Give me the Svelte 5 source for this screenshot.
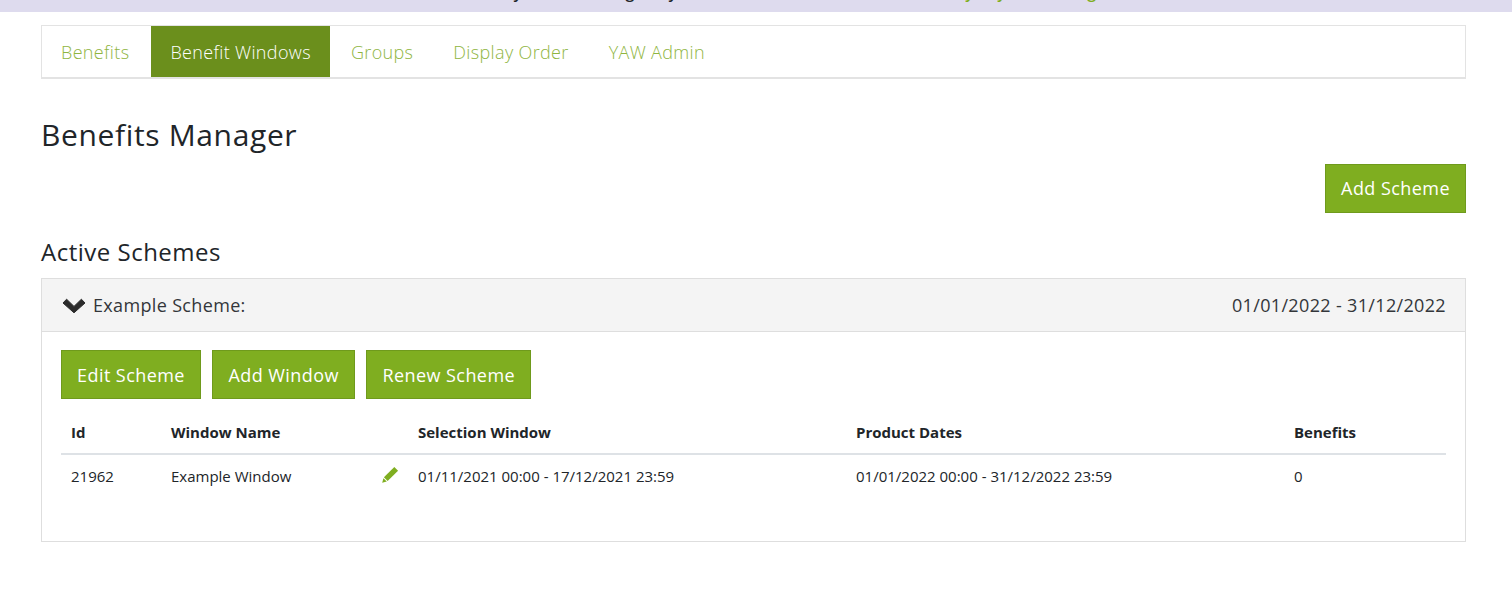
<script lang="ts">
	const tabs = ['Benefits', 'Benefit Windows', 'Groups', 'Display Order', 'YAW Admin'];
	const active = 'Benefit Windows';
	const actions = ['Edit Scheme', 'Add Window', 'Renew Scheme'];
</script>

<div class="banner">
	<p>Admin area: your windows go to your scheme and the head office too <span>by any of the wing</span></p>
</div>

<div class="page">
	<nav class="tabs">
		{#each tabs as tab}
			<a href="#top" class:active={tab === active}>{tab}</a>
		{/each}
	</nav>

	<h1>Benefits Manager</h1>
	<div class="toolbar">
		<button>Add Scheme</button>
	</div>

	<h2>Active Schemes</h2>
	<section class="panel">
		<header>
			<div class="title">
				<svg viewBox="0 0 24 16" width="24" height="16" aria-hidden="true">
					<path d="M1 6 4.6 2.2 12 9.4 19.4 2.2 23 6 12 15.8Z" fill="#2b2b2b" stroke="#2b2b2b" stroke-linejoin="round" />
				</svg>
				<span>Example Scheme:</span>
			</div>
			<span class="dates">01/01/2022 - 31/12/2022</span>
		</header>
		<div class="body">
			<div class="actions">
				{#each actions as action}
					<button>{action}</button>
				{/each}
			</div>
			<table>
				<thead>
					<tr>
						<th class="id">Id</th>
						<th class="name">Window Name</th>
						<th class="edit"></th>
						<th class="sel">Selection Window</th>
						<th class="prod">Product Dates</th>
						<th>Benefits</th>
					</tr>
				</thead>
				<tbody>
					<tr>
						<td>21962</td>
						<td>Example Window</td>
						<td class="edit">
							<svg viewBox="0 0 16 16" width="17" height="17" aria-hidden="true">
								<path d="M11.6.9 15.1 4.4 5.3 14.2 1.8 10.7Z" fill="#7fae20" />
								<path d="M1.3 11.5 4.5 14.7.2 15.8Z" fill="#7fae20" />
							</svg>
						</td>
						<td>01/11/2021 00:00 - 17/12/2021 23:59</td>
						<td>01/01/2022 00:00 - 31/12/2022 23:59</td>
						<td>0</td>
					</tr>
				</tbody>
			</table>
		</div>
	</section>
</div>

<style>
	:global(body) {
		margin: 0;
		background: #fff;
		font-family: "Open Sans", sans-serif;
		color: #212529;
	}
	.banner {
		height: 12px;
		background: #dedbee;
		overflow: hidden;
		display: flex;
		justify-content: center;
		align-items: flex-start;
	}
	.banner p {
		margin: -18px 0 0;
		font-size: 16px;
		line-height: 20px;
		font-weight: 600;
		white-space: nowrap;
		flex: none;
	}
	.banner span {
		color: #7fae20;
	}
	.page {
		padding: 13px 46px 0 41px;
	}
	.tabs {
		display: flex;
		height: 51px;
		border: 2px solid #e3e3e3;
		border-width: 1px 1px 2px;
	}
	.tabs a {
		padding: 0 20px;
		font-size: 18px;
		font-weight: 300;
		letter-spacing: 0.35px;
		line-height: 52px;
		color: #8fb53f;
		text-decoration: none;
	}
	.tabs a:first-child {
		padding-left: 19px;
	}
	.tabs a.active {
		background: #6b8f1c;
		color: #fff;
		padding: 0 19px;
		margin: 0 1px 0 2px;
	}
	h1 {
		margin: 35px 0 0;
		font-size: 30px;
		line-height: 41px;
		font-weight: 400;
		letter-spacing: 0.64px;
	}
	.toolbar {
		display: flex;
		justify-content: flex-end;
		margin-top: 9px;
	}
	button {
		height: 49px;
		padding: 0 15px 1px;
		border: 1px solid #6f9a1c;
		background: #7fae20;
		color: #fff;
		font-family: inherit;
		font-size: 18px;
		letter-spacing: 0.44px;
	}
	.actions button {
		padding-bottom: 0;
	}
	h2 {
		margin: 22px 0 0;
		font-size: 24px;
		line-height: 33px;
		font-weight: 400;
		letter-spacing: 0.5px;
	}
	.panel {
		margin-top: 10px;
		border: 1px solid #dedede;
		height: 264px;
		box-sizing: border-box;
	}
	.panel header {
		display: flex;
		justify-content: space-between;
		align-items: center;
		height: 52px;
		padding: 0 19px 0 20px;
		background: #f4f4f4;
		border-bottom: 1px solid #dedede;
		font-size: 18px;
		letter-spacing: 0.34px;
		color: #33363a;
	}
	.title {
		display: flex;
		align-items: center;
		gap: 7px;
	}
	.body {
		padding: 18px 19px 0;
	}
	.actions {
		display: flex;
		gap: 11.5px;
	}
	table {
		width: 100%;
		margin-top: 12px;
		border-collapse: collapse;
		table-layout: fixed;
		font-size: 15px;
	}
	th {
		text-align: left;
		font-weight: 700;
		height: 42px;
		padding: 0 10px;
		border-bottom: 2px solid #dee2e6;
	}
	td {
		padding: 11px 10px;
		line-height: 20px;
		vertical-align: top;
	}
	.id { width: 80px; }
	.name { width: 180px; }
	th.edit { width: 47px; padding: 0; }
	td.edit { padding: 11px 0 0; text-align: right; }
	td.edit svg { display: block; margin: 0 9px 0 auto; }
	.sel, .prod { width: 418px; }
</style>
